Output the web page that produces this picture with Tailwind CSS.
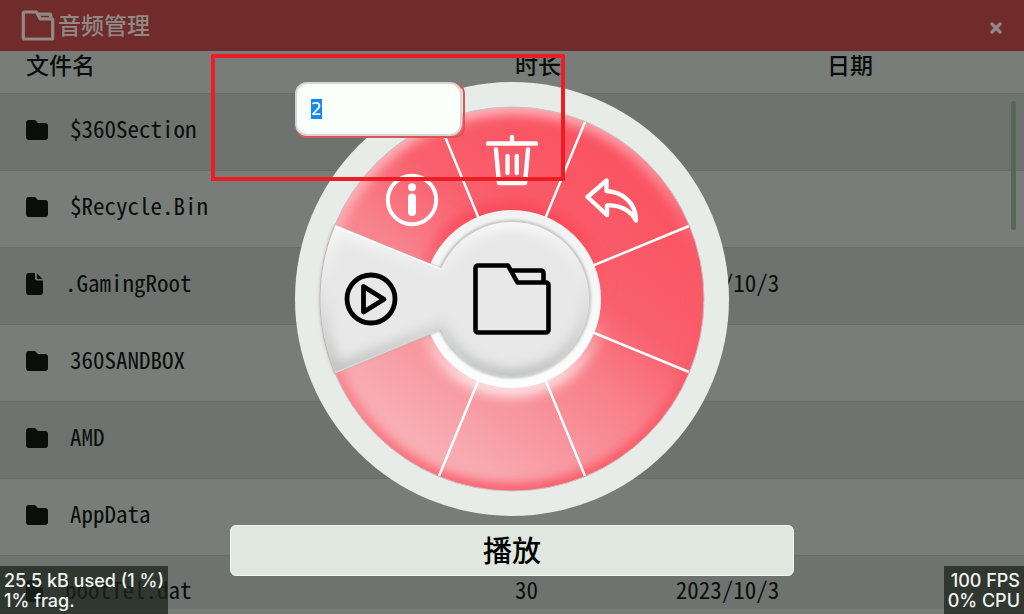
<!DOCTYPE html>
<html lang="zh-CN">
<head>
  <meta charset="UTF-8">
  <meta name="viewport" content="width=device-width, initial-scale=1.0">
  <title>音频管理</title>
  <script src="https://cdn.jsdelivr.net/npm/@tailwindcss/browser@4"></script>
</head>
<body class="relative h-screen overflow-hidden flex flex-col bg-[#787d79] text-[#0a0e0b] text-[23px] leading-[30px] font-['Noto_Sans_Mono_CJK_SC','Noto_Sans_CJK_SC',monospace]">
  <!-- Shared icons -->
  <svg class="hidden">
    <symbol id="i-folder" viewBox="0 0 22 20"><path d="M3 0h6l3 3h7a3 3 0 0 1 3 3v11a3 3 0 0 1-3 3H3a3 3 0 0 1-3-3V3a3 3 0 0 1 3-3z" fill="currentColor"/></symbol>
    <symbol id="i-file" viewBox="0 0 17 22"><path d="M3 0h6v5.500a2 2 0 0 0 2 2h6V19a3 3 0 0 1-3 3H3a3 3 0 0 1-3-3V3a3 3 0 0 1 3-3z" fill="currentColor"/><path d="M11 .5l5.500 5.500H12a1 1 0 0 1-1-1z" fill="currentColor"/></symbol>
    <symbol id="i-folder-line" viewBox="0 0 78 72" overflow="visible"><path d="M5 2.500h30l9.500 17H73a2.500 2.500 0 0 1 2.500 2.500v45a2.500 2.500 0 0 1-2.500 2.500H5a2.500 2.500 0 0 1-2.500-2.500V5A2.500 2.500 0 0 1 5 2.500zM37 7.500h31a2.500 2.500 0 0 1 2.500 2.500v9" fill="none" stroke="currentColor" stroke-linejoin="round"/></symbol>
  </svg>

  <!-- Title bar -->
  <header class="h-[51px] shrink-0 flex items-center justify-between px-[22px] pb-1 bg-[#702b2a] text-[#8f8a86]">
    <h1 class="flex items-center gap-1 font-['Noto_Sans_CJK_SC',sans-serif] font-medium">
      <svg class="w-8 h-[29px] mt-1 overflow-visible" stroke-width="8"><use href="#i-folder-line"/></svg>
      音频管理
    </h1>
    <button class="w-3 h-3 mt-2" aria-label="关闭">
      <svg viewBox="0 0 12 12" class="w-3 h-3"><path d="M2 2l8 8M10 2l-8 8" stroke="currentColor" stroke-width="3.200" stroke-linecap="round"/></svg>
    </button>
  </header>

  <!-- File list -->
  <main class="relative flex-1 min-h-0">
    <table class="w-full table-fixed text-left">
      <colgroup><col class="w-[50.3%]"><col class="w-[15.7%]"><col></colgroup>
      <thead>
        <tr class="h-[42px] align-top leading-[26px] font-['Noto_Sans_CJK_SC',sans-serif]">
          <th class="font-medium pl-[26px]">文件名</th>
          <th class="font-medium">时长</th>
          <th class="font-medium text-center">日期</th>
        </tr>
      </thead>
      <tbody>
        <tr class="h-[77px] border-t border-[#696e6a] bg-[#6e736f]"><td class="pl-[26px] pb-2"><div class="flex items-center gap-[22px]"><svg class="w-[22px] h-5 mt-1"><use href="#i-folder"/></svg>$360Section</div></td><td></td><td></td></tr>
        <tr class="h-[77px] border-t border-[#696e6a]"><td class="pl-[26px] pb-2"><div class="flex items-center gap-[22px]"><svg class="w-[22px] h-5 mt-1"><use href="#i-folder"/></svg>$Recycle.Bin</div></td><td></td><td></td></tr>
        <tr class="h-[77px] border-t border-[#696e6a] bg-[#6e736f]"><td class="pl-[26px] pb-2"><div class="flex items-center gap-[22px]"><svg class="w-[17px] h-[22px] mt-1"><use href="#i-file"/></svg>.GamingRoot</div></td><td class="pb-2">28</td><td class="pb-2">2023/10/3</td></tr>
        <tr class="h-[77px] border-t border-[#696e6a]"><td class="pl-[26px] pb-2"><div class="flex items-center gap-[22px]"><svg class="w-[22px] h-5 mt-1"><use href="#i-folder"/></svg>360SANDBOX</div></td><td></td><td></td></tr>
        <tr class="h-[77px] border-t border-[#696e6a] bg-[#6e736f]"><td class="pl-[26px] pb-2"><div class="flex items-center gap-[22px]"><svg class="w-[22px] h-5 mt-1"><use href="#i-folder"/></svg>AMD</div></td><td></td><td></td></tr>
        <tr class="h-[77px] border-t border-[#696e6a]"><td class="pl-[26px] pb-2"><div class="flex items-center gap-[22px]"><svg class="w-[22px] h-5 mt-1"><use href="#i-folder"/></svg>AppData</div></td><td></td><td></td></tr>
        <tr class="h-[54px] align-top border-t border-[#696e6a] bg-[#6e736f]"><td class="pl-[26px] pt-[18px]"><div class="flex items-center gap-[22px]"><svg class="w-[17px] h-[22px] mt-1"><use href="#i-file"/></svg>bootTel.dat</div></td><td class="pt-[18px]">30</td><td class="pt-[18px]">2023/10/3</td></tr>
      </tbody>
    </table>
    <!-- Scroll thumb -->
    <div class="absolute right-2 top-[50px] w-[5px] h-[129px] rounded-sm bg-[#586558]"></div>
  </main>

  <!-- Radial menu -->
  <nav class="absolute left-1/2 top-[82px] w-[434px] h-[434px] -translate-x-1/2" aria-label="文件操作">
    <svg viewBox="-217 -217 434 434" class="absolute inset-0 w-full h-full">
      <defs>
        <linearGradient id="disc" x1=".78" y1=".12" x2=".22" y2=".88">
          <stop offset="0" stop-color="#fa5260"/><stop offset=".35" stop-color="#f9606d"/><stop offset=".55" stop-color="#f8808a"/><stop offset="1" stop-color="#f8b2b8"/>
        </linearGradient>
        <linearGradient id="rim" x1=".2" y1="0" x2=".5" y2="1">
          <stop offset="0" stop-color="#ffccd1"/><stop offset=".35" stop-color="#ffb0b7" stop-opacity=".7"/><stop offset=".55" stop-color="#fb5e6b" stop-opacity=".5"/><stop offset="1" stop-color="#fa5563"/>
        </linearGradient>
        <linearGradient id="halo" x1="0" y1="0" x2="0" y2="1">
          <stop offset=".1" stop-color="#fb4454" stop-opacity=".8"/><stop offset=".5" stop-color="#fb5a68" stop-opacity="0"/><stop offset=".6" stop-color="#fff" stop-opacity="0"/><stop offset=".95" stop-color="#fff" stop-opacity=".75"/>
        </linearGradient>
        <linearGradient id="edge" x1="0" y1="0" x2="0" y2="1">
          <stop offset="0" stop-color="#fafafa"/><stop offset=".5" stop-color="#e0e2e1"/><stop offset="1" stop-color="#bbbfbc"/>
        </linearGradient>
        <linearGradient id="ring" x1="0" y1="0" x2="0" y2="1">
          <stop offset="0" stop-color="#f1f3f2"/><stop offset=".5" stop-color="#f7f9f8"/><stop offset="1" stop-color="#fdfffe"/>
        </linearGradient>
        <clipPath id="disc-clip"><circle r="192"/></clipPath>
        <clipPath id="key-clip"><path id="key" d="M-177-73L-71-30A77 77 0 1 1-71 30L-177 73A192 192 0 0 1-177-73z"/></clipPath>
        <filter id="b1" x="-20%" y="-20%" width="140%" height="140%"><feGaussianBlur stdDeviation="1.500"/></filter>
        <filter id="b6" x="-20%" y="-20%" width="140%" height="140%"><feGaussianBlur stdDeviation="6"/></filter>
      </defs>
      <circle r="217" fill="#e7ece8"/>
      <circle r="192" fill="url(#disc)"/>
      <g clip-path="url(#disc-clip)">
        <circle r="192" fill="none" stroke="url(#rim)" stroke-width="14" filter="url(#b6)"/>
        <circle r="90" fill="none" stroke="url(#halo)" stroke-width="16" filter="url(#b6)"/>
        <path d="M-73-177L73 177M73-177L-73 177M177-73L-177 73M177 73L-177-73" stroke="#fff" stroke-width="2.500"/>
      </g>
      <circle r="192" fill="none" stroke="#c9c4c3"/>
      <circle r="89" fill="url(#ring)"/>
      <circle r="78" fill="none" stroke="#d0d4d1" stroke-width="2" filter="url(#b1)"/>
      <!-- Selected sector joined with the hub -->
      <use href="#key" fill="none" stroke="#b5aaaa" stroke-width="2" filter="url(#b1)"/>
      <use href="#key" fill="#e8e8e8"/>
      <g clip-path="url(#key-clip)">
        <use href="#key" fill="none" stroke="url(#edge)" stroke-width="14" filter="url(#b6)"/>
      </g>
      <path d="M-177-73L-71-30" fill="none" stroke="#fff" stroke-width="1.500" opacity=".8"/>
    </svg>
    <button class="absolute left-[49px] top-[190px] w-[54px] h-[54px] text-black" aria-label="播放">
      <svg viewBox="0 0 54 54" class="w-full h-full" fill="none" stroke="currentColor" stroke-width="4.800" stroke-linejoin="round"><circle cx="27" cy="27" r="24"/><path d="M19.500 14.500v25.500L40 27.200z"/></svg>
    </button>
    <button class="absolute left-[90px] top-[91px] w-[54px] h-[54px] text-white" aria-label="信息">
      <svg viewBox="0 0 54 54" class="w-full h-full" fill="none" stroke="currentColor" stroke-linecap="round"><circle cx="27" cy="27" r="24.200" stroke-width="4"/><circle cx="27" cy="14.300" r="4" fill="currentColor" stroke="none"/><path d="M27 24.500v14.500" stroke-width="8"/></svg>
    </button>
    <button class="absolute left-[190px] top-[50px] w-[54px] h-[54px] text-white" aria-label="删除">
      <svg viewBox="0 0 54 54" class="w-full h-full" fill="none" stroke="currentColor" stroke-width="4.400" stroke-linecap="round" stroke-linejoin="round"><path d="M3 11.500h48M27 5v6M11 17.500l3 33.500h26L43 17.500M22.500 24v17M31.800 24v17"/></svg>
    </button>
    <button class="absolute left-[290px] top-[95px] w-[54px] h-[48px] text-white" aria-label="返回">
      <svg viewBox="0 0 54 48" class="w-full h-full" fill="none" stroke="currentColor" stroke-width="4.400" stroke-linejoin="round"><path d="M2.500 20L21.500 3.500V14C38 15 51 26 51 43.500C46 34 35 27.500 22 28.500V38z"/></svg>
    </button>
    <button class="absolute left-[178px] top-[181px] w-[78px] h-[72px] text-black" aria-label="文件夹">
      <svg class="w-full h-full" stroke-width="4.600"><use href="#i-folder-line"/></svg>
    </button>
  </nav>

  <!-- Label of the selected action -->
  <div class="absolute inset-x-[22.5%] top-[525px] h-[51px] pb-1 flex items-center justify-center rounded-md border border-[#f1f6f1] bg-[#e0e7df] text-black text-[29px] leading-[36px] font-medium font-['Noto_Sans_CJK_SC',sans-serif]">播放</div>

  <!-- Marked region with its note field -->
  <div class="absolute left-[211px] top-[54px] w-[354px] h-[127px] border-4 border-[#ee1c24]">
    <div class="absolute left-[81px] top-[25px] w-[169px] h-[55px] rounded-[10px] border-2 border-[#d8564f]"></div>
    <input id="note" type="text" value="2" aria-label="备注" class="absolute left-[80px] top-6 w-[167px] h-[54px] px-[14px] rounded-xl border-2 border-[#d6d6d6] bg-[#fafffb] text-black text-[17px] font-['DejaVu_Sans',sans-serif] outline-none caret-transparent selection:bg-[#1687f0] selection:text-white">
  </div>

  <!-- Monitors -->
  <div class="absolute left-0 bottom-0 h-12 px-1 pt-[5px] bg-[#1c231c]/75 text-[#f0f4f0] text-[18px] leading-[20px] font-medium font-['Inter',sans-serif]">25.5 kB used (1 %)<br>1% frag.</div>
  <div class="absolute right-0 bottom-0 h-12 px-1 pt-[5px] bg-[#1c231c]/75 text-[#f0f4f0] text-[18px] leading-[20px] font-medium text-right font-['Inter',sans-serif]">100 FPS<br>0% CPU</div>

  <script>
    document.getElementById('note').select();
  </script>
</body>
</html>
